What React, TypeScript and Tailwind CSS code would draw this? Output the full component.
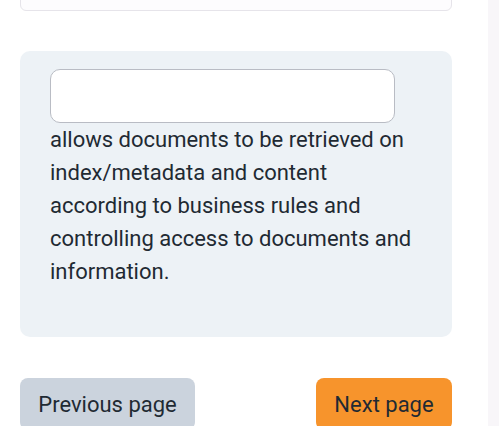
import React from "react";

export default function App() {
  return (
    <div
      className="relative w-[499px] h-[426px] overflow-hidden bg-white"
      style={{ fontFamily: "Roboto, 'Noto Sans', sans-serif" }}
    >
      <div className="absolute right-0 top-0 h-full w-[11px] bg-[#f8f6f9]" />
      <div className="w-[488px] pl-[20px] pr-[36px]">
        <div className="-mt-[30px] h-[41px] rounded-[6px] border border-[#e6e4ea] bg-[#fdfcfe]" />
        <div className="mt-[40px] h-[286px] rounded-[10px] bg-[#edf2f6] pl-[30px] pr-[20px] pt-[18px]">
          <div className="h-[54px] w-[345px] rounded-[10px] border border-[#b9bcc4] bg-white" />
          <p className="w-[370px] text-[22px] leading-[33px] text-[#1f2a33]">
            allows documents to be retrieved on index/metadata and content according to business rules and controlling access to documents and information.
          </p>
        </div>
        <div className="mt-[41px] flex justify-between">
          <button className="h-[52px] w-[175px] rounded-[8px] bg-[#cbd3dd] text-[22px] text-[#1f2a33]">
            Previous page
          </button>
          <button className="h-[52px] w-[136px] rounded-[8px] bg-[#f7942c] text-[22px] text-[#1f2a33]">
            Next page
          </button>
        </div>
      </div>
    </div>
  );
}
